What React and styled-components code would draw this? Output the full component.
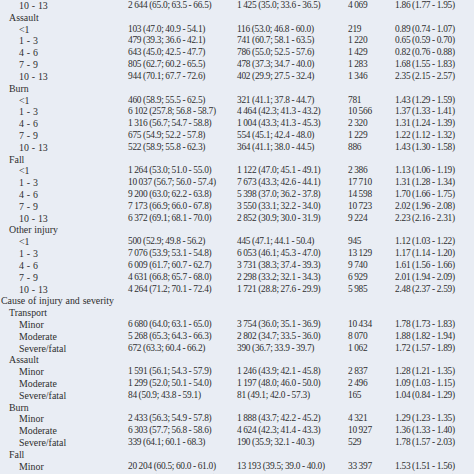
import React from "react";
import styled, { createGlobalStyle } from "styled-components";

const Global = createGlobalStyle`
  html, body { margin: 0; padding: 0; background: #e9edf4; }
  body { overflow: hidden; }
`;

const Table = styled.div`
  width: 474px;
  height: 474px;
  overflow: hidden;
  background: #e9edf4;
  color: #2e2e2e;
  font-family: "Liberation Serif", "Times New Roman", serif;
  font-size: 9.9px;
  display: grid;
  grid-template-columns: 128px 109px 111px 47px 1fr;
  grid-auto-rows: 11.82px;
  align-items: center;
`;

const Label = styled.div`
  padding-left: ${(p) => [1, 9, 19][p.level]}px;
  white-space: nowrap;
  line-height: 11.82px;
  word-spacing: 0.4px;
`;

const Cell = styled.div`
  white-space: nowrap;
  line-height: 11.82px;
  font-size: 9.4px;
  letter-spacing: -0.27px;
  word-spacing: -0.3px;
`;

const rows = [
  [2, "10 - 13", "2 644 (65.0; 63.5 - 66.5)", "1 425 (35.0; 33.6 - 36.5)", "4 069", "1.86 (1.77 - 1.95)"],
  [1, "Assault"],
  [2, "<1", "103 (47.0; 40.9 - 54.1)", "116 (53.0; 46.8 - 60.0)", "219", "0.89 (0.74 - 1.07)"],
  [2, "1 - 3", "479 (39.3; 36.6 - 42.1)", "741 (60.7; 58.1 - 63.5)", "1 220", "0.65 (0.59 - 0.70)"],
  [2, "4 - 6", "643 (45.0; 42.5 - 47.7)", "786 (55.0; 52.5 - 57.6)", "1 429", "0.82 (0.76 - 0.88)"],
  [2, "7 - 9", "805 (62.7; 60.2 - 65.5)", "478 (37.3; 34.7 - 40.0)", "1 283", "1.68 (1.55 - 1.83)"],
  [2, "10 - 13", "944 (70.1; 67.7 - 72.6)", "402 (29.9; 27.5 - 32.4)", "1 346", "2.35 (2.15 - 2.57)"],
  [1, "Burn"],
  [2, "<1", "460 (58.9; 55.5 - 62.5)", "321 (41.1; 37.8 - 44.7)", "781", "1.43 (1.29 - 1.59)"],
  [2, "1 - 3", "6 102 (257.8; 56.8 - 58.7)", "4 464 (42.3; 41.3 - 43.2)", "10 566", "1.37 (1.33 - 1.41)"],
  [2, "4 - 6", "1 316 (56.7; 54.7 - 58.8)", "1 004 (43.3; 41.3 - 45.3)", "2 320", "1.31 (1.24 - 1.39)"],
  [2, "7 - 9", "675 (54.9; 52.2 - 57.8)", "554 (45.1; 42.4 - 48.0)", "1 229", "1.22 (1.12 - 1.32)"],
  [2, "10 - 13", "522 (58.9; 55.8 - 62.3)", "364 (41.1; 38.0 - 44.5)", "886", "1.43 (1.30 - 1.58)"],
  [1, "Fall"],
  [2, "<1", "1 264 (53.0; 51.0 - 55.0)", "1 122 (47.0; 45.1 - 49.1)", "2 386", "1.13 (1.06 - 1.19)"],
  [2, "1 - 3", "10 037 (56.7; 56.0 - 57.4)", "7 673 (43.3; 42.6 - 44.1)", "17 710", "1.31 (1.28 - 1.34)"],
  [2, "4 - 6", "9 200 (63.0; 62.2 - 63.8)", "5 398 (37.0; 36.2 - 37.8)", "14 598", "1.70 (1.66 - 1.75)"],
  [2, "7 - 9", "7 173 (66.9; 66.0 - 67.8)", "3 550 (33.1; 32.2 - 34.0)", "10 723", "2.02 (1.96 - 2.08)"],
  [2, "10 - 13", "6 372 (69.1; 68.1 - 70.0)", "2 852 (30.9; 30.0 - 31.9)", "9 224", "2.23 (2.16 - 2.31)"],
  [1, "Other injury"],
  [2, "<1", "500 (52.9; 49.8 - 56.2)", "445 (47.1; 44.1 - 50.4)", "945", "1.12 (1.03 - 1.22)"],
  [2, "1 - 3", "7 076 (53.9; 53.1 - 54.8)", "6 053 (46.1; 45.3 - 47.0)", "13 129", "1.17 (1.14 - 1.20)"],
  [2, "4 - 6", "6 009 (61.7; 60.7 - 62.7)", "3 731 (38.3; 37.4 - 39.3)", "9 740", "1.61 (1.56 - 1.66)"],
  [2, "7 - 9", "4 631 (66.8; 65.7 - 68.0)", "2 298 (33.2; 32.1 - 34.3)", "6 929", "2.01 (1.94 - 2.09)"],
  [2, "10 - 13", "4 264 (71.2; 70.1 - 72.4)", "1 721 (28.8; 27.6 - 29.9)", "5 985", "2.48 (2.37 - 2.59)"],
  [0, "Cause of injury and severity"],
  [1, "Transport"],
  [2, "Minor", "6 680 (64.0; 63.1 - 65.0)", "3 754 (36.0; 35.1 - 36.9)", "10 434", "1.78 (1.73 - 1.83)"],
  [2, "Moderate", "5 268 (65.3; 64.3 - 66.3)", "2 802 (34.7; 33.5 - 36.0)", "8 070", "1.88 (1.82 - 1.94)"],
  [2, "Severe/fatal", "672 (63.3; 60.4 - 66.2)", "390 (36.7; 33.9 - 39.7)", "1 062", "1.72 (1.57 - 1.89)"],
  [1, "Assault"],
  [2, "Minor", "1 591 (56.1; 54.3 - 57.9)", "1 246 (43.9; 42.1 - 45.8)", "2 837", "1.28 (1.21 - 1.35)"],
  [2, "Moderate", "1 299 (52.0; 50.1 - 54.0)", "1 197 (48.0; 46.0 - 50.0)", "2 496", "1.09 (1.03 - 1.15)"],
  [2, "Severe/fatal", "84 (50.9; 43.8 - 59.1)", "81 (49.1; 42.0 - 57.3)", "165", "1.04 (0.84 - 1.29)"],
  [1, "Burn"],
  [2, "Minor", "2 433 (56.3; 54.9 - 57.8)", "1 888 (43.7; 42.2 - 45.2)", "4 321", "1.29 (1.23 - 1.35)"],
  [2, "Moderate", "6 303 (57.7; 56.8 - 58.6)", "4 624 (42.3; 41.4 - 43.3)", "10 927", "1.36 (1.33 - 1.40)"],
  [2, "Severe/fatal", "339 (64.1; 60.1 - 68.3)", "190 (35.9; 32.1 - 40.3)", "529", "1.78 (1.57 - 2.03)"],
  [1, "Fall"],
  [2, "Minor", "20 204 (60.5; 60.0 - 61.0)", "13 193 (39.5; 39.0 - 40.0)", "33 397", "1.53 (1.51 - 1.56)"],
  [2, "Moderate", "18 410 (61.4; 60.8 - 62.0)", "11 574 (38.6; 38.0 - 39.2)", "29 984", "1.59 (1.55 - 1.63)"],
];

export default function App() {
  return (
    <>
      <Global />
      <Table>
        {rows.map((r, i) => (
          <React.Fragment key={i}>
            <Label level={r[0]}>{r[1]}</Label>
            <Cell>{r[2] || ""}</Cell>
            <Cell>{r[3] || ""}</Cell>
            <Cell>{r[4] || ""}</Cell>
            <Cell>{r[5] || ""}</Cell>
          </React.Fragment>
        ))}
      </Table>
    </>
  );
}
